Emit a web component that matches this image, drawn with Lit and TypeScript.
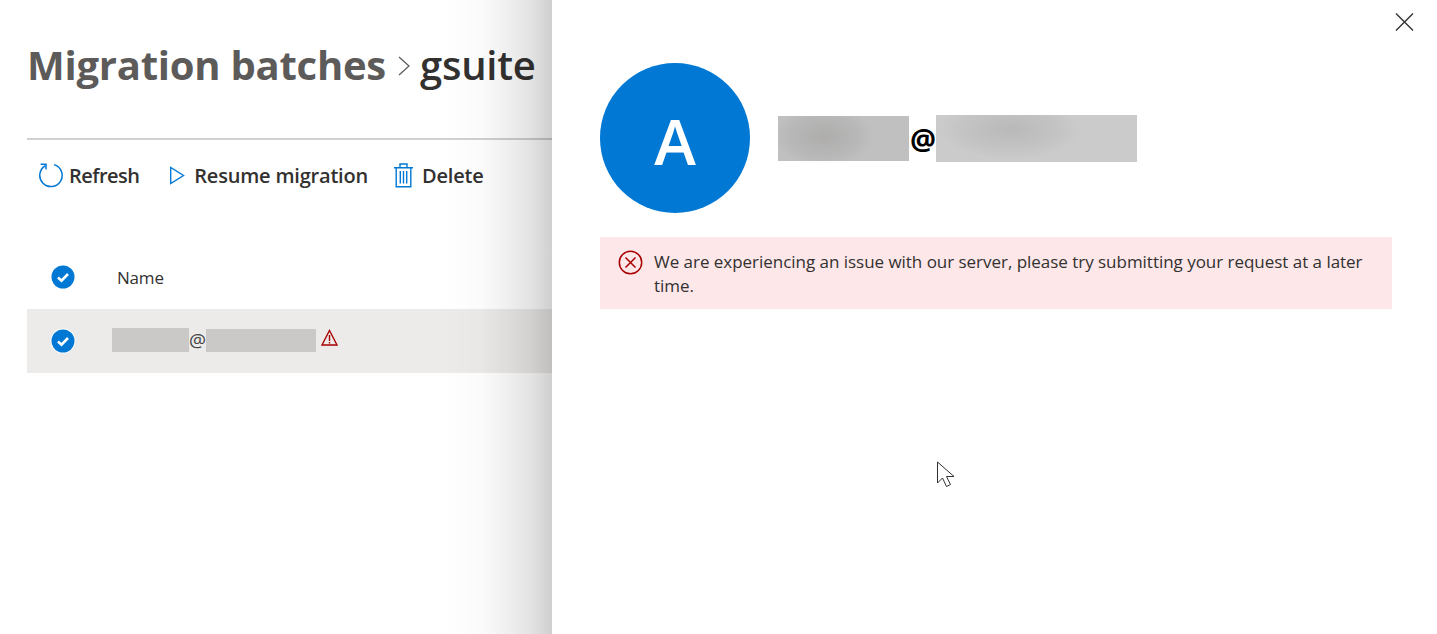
import { LitElement, html, css } from "lit";
import { customElement } from "lit/decorators.js";

@customElement("app-root")
export class AppRoot extends LitElement {
  static styles = css`
    :host {
      display: block;
      width: 1437px;
      height: 634px;
      overflow: hidden;
      background: #fff;
      font-family: "Open Sans", "Noto Sans", sans-serif;
      color: #323130;
    }
    .page {
      display: grid;
      grid-template-columns: 552px 885px;
      height: 634px;
    }
    .main {
      padding: 35px 0 0 27px;
      min-width: 0;
      overflow: hidden;
    }
    .crumbs {
      display: flex;
      align-items: center;
      height: 59px;
      white-space: nowrap;
      font-size: 40px;
      line-height: 59px;
      letter-spacing: -0.24px;
    }
    .parent { font-weight: 700; color: #5c5b5a; }
    .current { font-weight: 600; color: #323130; }
    .sep { width: 12px; height: 20px; margin: 3px 10px 0 12px; flex: none; }
    .rule { height: 2px; background: #d0d0d0; margin-top: 44px; }
    .toolbar {
      display: flex;
      align-items: center;
      height: 34px;
      margin-top: 18px;
      padding-left: 11px;
      font-size: 20px;
      font-weight: 600;
      letter-spacing: -0.2px;
      white-space: nowrap;
    }
    .cmd { display: flex; align-items: center; }
    .cmd svg { flex: none; }
    .c1 { gap: 6px; margin-right: 30px; letter-spacing: -0.55px; }
    .c2 { gap: 9px; margin-right: 26px; }
    .c3 { gap: 9px; }
    .head {
      display: flex;
      align-items: center;
      height: 64px;
      margin-top: 53px;
      font-size: 17px;
      letter-spacing: -0.2px;
    }
    .head .name { margin-left: 41px; }
    .check { flex: none; margin-left: 23px; }
    .row {
      display: flex;
      align-items: center;
      height: 64px;
      background: #edebe9;
    }
    .cell {
      display: flex;
      align-items: center;
      margin-left: 36px;
      margin-top: -3px;
      font-size: 19px;
    }
    .mask { background: #cbc9c7; }
    .m1 { width: 77px; height: 24px; }
    .m2 { width: 110px; height: 23px; margin-top: 1px; }
    .at { width: 17px; overflow: hidden; white-space: nowrap; color: #444; }
    .warn { margin: -4px 0 0 5px; flex: none; }
    .panel {
      position: relative;
      z-index: 1;
      background: #fff;
      padding: 63px 45px 0 48px;
    }
    .shade {
      position: absolute;
      top: 0;
      bottom: 0;
      left: -110px;
      width: 110px;
      background: linear-gradient(
        to right,
        rgba(0, 0, 0, 0),
        rgba(0, 0, 0, 0.015) 35%,
        rgba(0, 0, 0, 0.065) 62%,
        rgba(0, 0, 0, 0.11) 80%,
        rgba(0, 0, 0, 0.19)
      );
    }
    .close { position: absolute; top: 13px; right: 23px; display: block; }
    .persona { display: flex; align-items: center; gap: 28px; }
    .avatar {
      width: 150px;
      height: 150px;
      flex: none;
      border-radius: 50%;
      background: #0078d4;
      color: #fff;
      display: flex;
      align-items: center;
      justify-content: center;
      font-size: 63px;
      font-weight: 600;
      padding-top: 5px;
      box-sizing: border-box;
    }
    .email { display: flex; align-items: center; margin-top: 1px; }
    .blur1 {
      width: 131px;
      height: 45px;
      background: radial-gradient(ellipse 50px 30px at 35% 45%, #aeadac, #b8b8b8 70%, #c0c0c0);
    }
    .blur2 {
      width: 201px;
      height: 47px;
      background: radial-gradient(ellipse 70px 30px at 37% 30%, #b9b9b9, #c4c4c4 70%, #cbcbcb);
    }
    .addr-at { width: 27px; text-align: center; font-size: 29px; font-weight: 700; color: #000; line-height: 30px; letter-spacing: -1px; }
    .alert {
      display: flex;
      gap: 11px;
      margin-top: 24px;
      height: 72px;
      box-sizing: border-box;
      padding: 13px 24px 0 18px;
      background: #fde7e9;
      font-size: 17px;
      line-height: 24px;
      letter-spacing: -0.03px;
    }
    .alert svg { flex: none; }
    .cursor { position: absolute; left: 384px; top: 461px; display: block; }
  `;

  private check() {
    return html`<svg class="check" width="26" height="26" viewBox="0 0 26 26">
      <circle cx="13" cy="13" r="12.5" fill="#fff" />
      <circle cx="13" cy="13" r="11.5" fill="#0078d4" />
      <path d="M8 13.5l3.5 3.2L18 10" fill="none" stroke="#fff" stroke-width="2.6" />
    </svg>`;
  }

  render() {
    return html`<div class="page">
      <section class="main">
        <div class="crumbs">
          <span class="parent">Migration batches</span>
          <svg class="sep" viewBox="0 0 12 20"><path d="M1 1l10 9-10 9" fill="none" stroke="#605e5c" stroke-width="1.3" /></svg>
          <span class="current">gsuite</span>
        </div>
        <div class="rule"></div>
        <div class="toolbar">
          <div class="cmd c1">
            <svg width="25" height="26" viewBox="0 0 25 26" fill="none" stroke="#0078d4" stroke-width="1.5">
              <path d="M7.500 3.600A11.200 11.200 0 1 0 16 2.600" />
              <path d="M2.600 2.200h5.400v5.400" />
            </svg>
            <span>Refresh</span>
          </div>
          <div class="cmd c2">
            <svg width="16" height="19" viewBox="0 0 16 19" fill="none" stroke="#0078d4" stroke-width="1.4">
              <path d="M1.700 1.500v16L14.500 9.500z" />
            </svg>
            <span>Resume migration</span>
          </div>
          <div class="cmd c3">
            <svg width="19" height="25" viewBox="0 0 19 25" fill="none" stroke="#0078d4" stroke-width="1.4">
              <path d="M0 4.700h19M2.200 4.700v19h14.600v-19M6 4.700V1h7v3.700" />
              <path d="M6.300 8v12.500M9.500 8v12.500M12.700 8v12.500" />
            </svg>
            <span>Delete</span>
          </div>
        </div>
        <div class="head">${this.check()}<span class="name">Name</span></div>
        <div class="row">
          ${this.check()}
          <div class="cell">
            <div class="mask m1"></div>
            <span class="at">@</span>
            <div class="mask m2"></div>
            <svg class="warn" width="17" height="17" viewBox="0 0 17 17" fill="none" stroke="#a80000" stroke-width="1.4">
              <path d="M8.500 1.500L16 16H1z" />
              <path d="M8.500 6v6M8.500 13v1.500" />
            </svg>
          </div>
        </div>
      </section>
      <section class="panel">
        <div class="shade"></div>
        <svg class="close" width="19" height="18" viewBox="0 0 19 18" stroke="#323130" stroke-width="1.4">
          <path d="M1 .5l17 17M18 .5l-17 17" />
        </svg>
        <div class="persona">
          <div class="avatar">A</div>
          <div class="email">
            <div class="blur1"></div>
            <span class="addr-at">@</span>
            <div class="blur2"></div>
          </div>
        </div>
        <div class="alert">
          <svg width="25" height="25" viewBox="0 0 25 25" fill="none" stroke="#a80000" stroke-width="1.5">
            <circle cx="12.500" cy="12.500" r="11.200" />
            <path d="M7.500 7.500l10 10M17.500 7.500l-10 10" />
          </svg>
          <span>We are experiencing an issue with our server, please try submitting your request at a later time.</span>
        </div>
        <svg class="cursor" width="19" height="28" viewBox="0 0 19 28" fill="#fff" stroke="#323130" stroke-width="1">
          <path d="M1.500 1v21l5-5 4 8.500 4-2-4-8h7.500z" />
        </svg>
      </section>
    </div>`;
  }
}
